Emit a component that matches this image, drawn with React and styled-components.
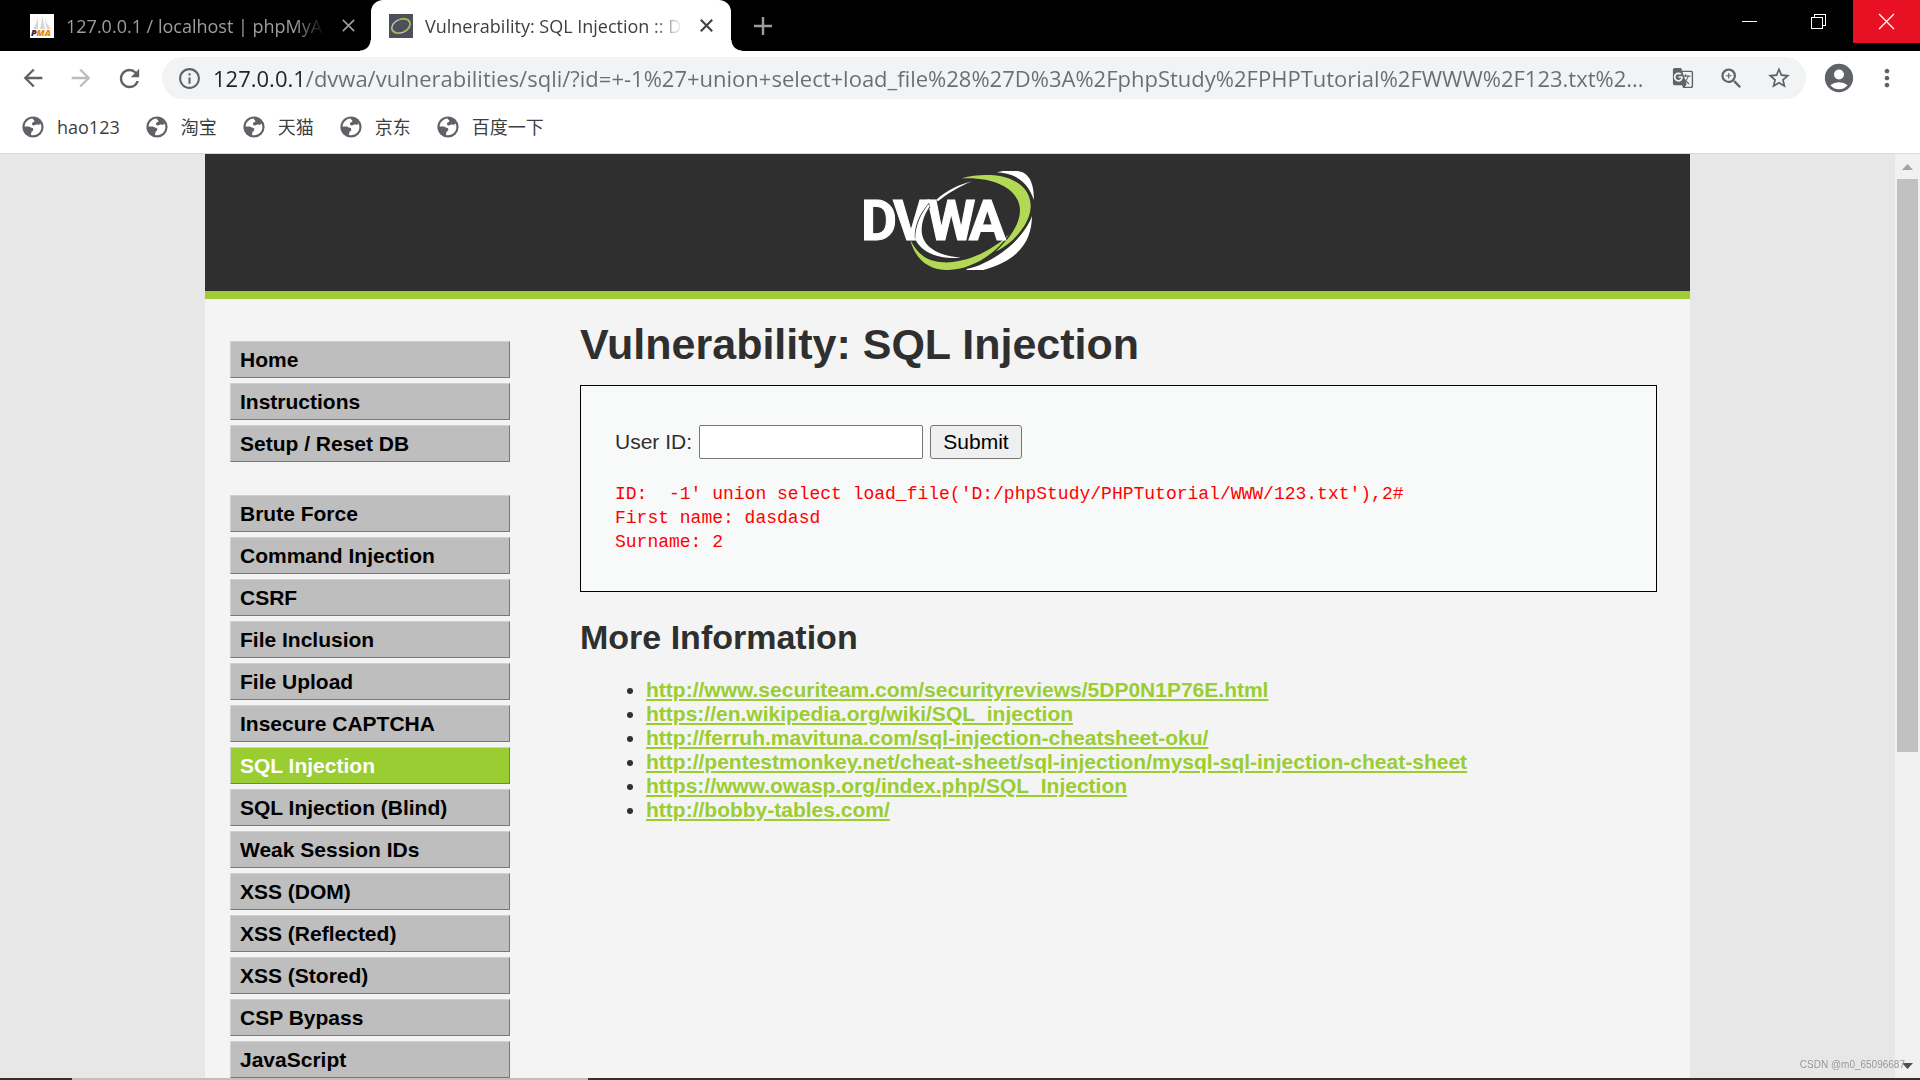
import React from "react";
import styled, { createGlobalStyle } from "styled-components";
import {
  MdArrowBack,
  MdArrowForward,
  MdRefresh,
  MdInfoOutline,
  MdGTranslate,
  MdZoomIn,
  MdStarBorder,
  MdAccountCircle,
  MdMoreVert,
} from "react-icons/md";

const uiFont = `"Open Sans", "Noto Sans CJK SC", sans-serif`;
const pageFont = `"Liberation Sans", Arial, sans-serif`;

const GlobalStyle = createGlobalStyle`
  *, *::before, *::after { box-sizing: border-box; }
  body { margin: 0; overflow: hidden; font-family: ${pageFont}; }
  button, input { font-family: inherit; }
  svg { display: block; flex: none; }
`;

const Window = styled.div`
  display: flex;
  flex-direction: column;
  height: 100vh;
  background: #fff;
`;

/* ---------- tab strip ---------- */

const TabStrip = styled.header`
  display: flex;
  align-items: flex-start;
  flex: none;
  height: 51px;
  background: #000;
  font-family: ${uiFont};
`;

const Tab = styled.div`
  position: relative;
  display: flex;
  align-items: center;
  gap: 12px;
  flex: none;
  width: ${(p) => (p.$active ? 360 : 371)}px;
  height: 51px;
  padding: 0 ${(p) => (p.$active ? 14 : 12)}px 0 ${(p) => (p.$active ? 18 : 30)}px;
  border-radius: 12px 12px 0 0;
  background: ${(p) => (p.$active ? "#fff" : "#000")};
  color: ${(p) => (p.$active ? "#3c4043" : "#9b9ea2")};

  &::before,
  &::after {
    content: "";
    display: ${(p) => (p.$active ? "block" : "none")};
    position: absolute;
    bottom: 0;
    width: 11px;
    height: 11px;
  }
  &::before {
    right: 100%;
    background: radial-gradient(circle at 0 0, #000 10px, #fff 11px);
  }
  &::after {
    left: 100%;
    background: radial-gradient(circle at 100% 0, #000 10px, #fff 11px);
  }
`;

const TabTitle = styled.span`
  flex: 1;
  min-width: 0;
  white-space: nowrap;
  font-size: 18px;
  line-height: 26px;
  mask-image: linear-gradient(90deg, #000 calc(100% - 30px), transparent);
`;

const PlainButton = styled.button`
  display: flex;
  align-items: center;
  justify-content: center;
  flex: none;
  padding: 0;
  border: 0;
  background: none;
  color: inherit;
`;

const TabClose = styled(PlainButton)`
  width: 22px;
  height: 22px;
`;

const NewTab = styled(PlainButton)`
  width: 64px;
  height: 51px;
  color: #9b9ea2;
`;

const WindowControls = styled.div`
  display: flex;
  margin-left: auto;
`;

const WindowButton = styled(PlainButton)`
  width: ${(p) => (p.$danger ? 67 : 69)}px;
  height: 43px;
  color: #fff;
  background: ${(p) => (p.$danger ? "#e81123" : "transparent")};
`;

/* ---------- toolbar ---------- */

const Toolbar = styled.div`
  display: flex;
  align-items: center;
  flex: none;
  height: 54px;
  padding: 0 9px;
  color: #5f6368;
  font-family: ${uiFont};
`;

const ToolButton = styled(PlainButton)`
  width: 48px;
  height: 42px;
  color: ${(p) => (p.$faded ? "#babcbe" : "#5f6368")};
`;

const AddressBar = styled.form`
  display: flex;
  align-items: center;
  flex: 1;
  min-width: 0;
  height: 42px;
  margin: 0 9px;
  padding: 0 3px 0 15px;
  border-radius: 21px;
  background: #f1f3f4;
`;

const Address = styled.input`
  flex: 1;
  min-width: 0;
  height: 32px;
  margin: 0 8px 0 11px;
  padding: 0;
  border: 0;
  outline: 0;
  font-size: 22px;
  color: transparent;
  background: linear-gradient(90deg, #202124 90px, #6a6d71 90px);
  background-clip: text;
  -webkit-background-clip: text;
`;

const Bookmarks = styled.nav`
  display: flex;
  align-items: center;
  gap: 26px;
  flex: none;
  height: 49px;
  padding: 0 22px 4px;
  border-bottom: 1px solid #d9dadc;
  font-family: ${uiFont};
`;

const Bookmark = styled.a`
  display: flex;
  align-items: center;
  gap: 13px;
  color: #3c4043;
  font-size: 18px;
  line-height: 26px;
  text-decoration: none;
`;

/* ---------- viewport ---------- */

const Viewport = styled.div`
  display: flex;
  flex: 1;
  min-height: 0;
  overflow: hidden;
`;

const Page = styled.div`
  flex: 1;
  min-width: 0;
  padding: 0 205px;
  overflow: hidden;
  background: #e7e7e7;
`;

const Container = styled.div`
  min-height: 100%;
  background: #f4f4f4;
  color: #2f2f2f;
  font-size: 21px;
`;

const Banner = styled.header`
  display: flex;
  justify-content: center;
  padding: 17px 0 21px;
  border-bottom: 8px solid #a1cc33;
  background: #2f2f2f;
`;

const Columns = styled.div`
  display: flex;
  align-items: flex-start;
  gap: 70px;
  padding: 0 33px 0 25px;
`;

const Sidebar = styled.nav`
  display: flex;
  flex-direction: column;
  gap: 28px;
  flex: none;
  width: 280px;
  padding-top: 42px;
`;

const MenuGroup = styled.ul`
  margin: 0;
  padding: 0;
  list-style: none;
`;

const MenuItem = styled.li`
  margin-bottom: 5px;
`;

const MenuLink = styled.a`
  display: block;
  height: 37px;
  padding: 0 9px;
  border: 1px solid;
  border-color: #d0d0d0 #6e7891 #6e7891 #d0d0d0;
  background: ${(p) => (p.$current ? "#9acd32" : "#bebebe")};
  color: ${(p) => (p.$current ? "#fff" : "#000")};
  font-weight: bold;
  line-height: 35px;
  text-decoration: none;
`;

const Main = styled.main`
  flex: 1;
  min-width: 0;
`;

const Title = styled.h1`
  margin: 20px 0 16px;
  font-size: 43px;
  line-height: 50px;
`;

const Panel = styled.section`
  padding: 39px 34px 37px;
  border: 1px solid #000;
  background: #f8faf9;
`;

const QueryForm = styled.form`
  display: flex;
  align-items: center;
  gap: 7px;
`;

const QueryInput = styled.input`
  width: 224px;
  height: 34px;
  padding: 2px 4px;
  border: 1px solid #767676;
  border-radius: 2px;
  background: #fff;
  font-size: 21px;
`;

const SubmitButton = styled.button`
  width: 92px;
  height: 34px;
  padding: 0;
  border: 1px solid #767676;
  border-radius: 3px;
  background: #efefef;
  color: #000;
  font-size: 21px;
  line-height: 24px;
`;

const Result = styled.pre`
  margin: 23px 0 0;
  color: #f00;
  font-family: "Liberation Mono", "Noto Sans CJK SC", monospace;
  font-size: 18px;
  line-height: 24px;
`;

const Subtitle = styled.h2`
  margin: 25px 0 21px;
  font-size: 34px;
  line-height: 40px;
`;

const LinkList = styled.ul`
  margin: 0;
  padding-left: 66px;
  line-height: 24px;
`;

const ExternalLink = styled.a`
  color: #9acd32;
  font-weight: bold;
`;

/* ---------- scrollbar, bottom edge, credit ---------- */

const ScrollTrack = styled.div`
  display: flex;
  flex-direction: column;
  flex: none;
  width: 25px;
  background: #f1f1f1;
`;

const ScrollArrow = styled(PlainButton)`
  width: 25px;
  height: 25px;
`;

const ScrollThumb = styled.div`
  flex: 0 0 62%;
  margin: 0 2px auto;
  background: #c1c1c1;
`;

const BottomEdge = styled.div`
  display: grid;
  grid-template-columns: 72px 516px 1fr;
  flex: none;
  height: 2px;
  background: #332f30;
`;

const EdgeSegment = styled.div`
  grid-column: 2;
  background: #bfbfbf;
`;

const Credit = styled.span`
  position: fixed;
  right: 15px;
  bottom: 8px;
  color: #909090;
  font-size: 10px;
  line-height: 14px;
  text-shadow: 0 0 1px #fff;
`;

/* ---------- drawings ---------- */

const CrossIcon = ({ size, width }) => (
  <svg width={size} height={size} viewBox="0 0 16 16" aria-hidden="true">
    <path d="M1 1l14 14M15 1L1 15" stroke="currentColor" strokeWidth={width} fill="none" />
  </svg>
);

const PmaIcon = () => (
  <svg width="24" height="24" viewBox="0 0 24 24" aria-hidden="true">
    <rect width="24" height="24" fill="#fdfdfd" />
    <path d="M8 3C7 8 5 12 3 15h5zM12 1c0 5-1 10-2 14h5c-1-5-2-10-3-14zM15 4c0 4 1 8 2 11h4c-3-3-5-7-6-11z" fill="#d6d6d6" />
    <text x="1" y="22" fontFamily="Open Sans, sans-serif" fontWeight="800" fontStyle="italic" fontSize="9" fill="#2b2b52">
      P<tspan fill="#e8860c">MA</tspan>
    </text>
  </svg>
);

const DvwaIcon = () => (
  <svg width="24" height="24" viewBox="0 0 24 24" aria-hidden="true">
    <rect width="24" height="24" fill="#4d505b" />
    <ellipse cx="12" cy="12" rx="9.5" ry="6.600" transform="rotate(-22 12 12)" fill="none" stroke="#c8cbc4" strokeWidth="1.3" />
    <path d="M9 6c6-3 12-1 12 3 0 4-3 7-7 9M2.500 14c0 5 5 6 9 4.500" fill="none" stroke="#98b53c" strokeWidth="1.3" />
  </svg>
);

const GlobeIcon = () => (
  <svg width="22" height="22" viewBox="0 0 22 22" aria-hidden="true">
    <circle cx="11" cy="11" r="10.6" fill="#5f6368" />
    <path
      d="M10.5 2.6C6 3 2.8 6.600 2.600 10.600H6.500c1.500 0 1.800 1 3.200 1.200 1.500.2 1.800 1 1.500 2.100-.3 1.200-1.600 1.200-1.900 2.600l-.3 2.600c6 1.300 10.400-3 10.400-8 0-1.400-.3-2.600-.9-3.700-.8 1.300-2.200 1.500-3.600 1.200-1.600-.3-1.700 1-3.100.9-1.700-.1-2.400-1.600-1.400-2.700.9-.9 2-.5 2-1.700 0-1-1.300-1.100-1.900-2.500z"
      fill="#fff"
    />
  </svg>
);

const RestoreIcon = () => (
  <svg width="16" height="16" viewBox="0 0 16 16" shapeRendering="crispEdges" aria-hidden="true">
    <path d="M.5 3.500h11v11h-11zM3.500 3.500v-3h11v11h-3" fill="none" stroke="currentColor" />
  </svg>
);

const DvwaLogo = () => (
  <svg width="173" height="99" viewBox="123 63 519 297" role="img" aria-label="DVWA">
    <path d="M425 85C455 76 480 74 510 75C590 78 634 120 632 172C630 222 580 280 527 304C580 255 600 215 600 180C598 120 530 80 425 85z" fill="#b2d856" />
    <path d="M270 268C285 330 330 362 385 360C450 358 520 320 568 252C520 300 440 340 370 337C320 335 290 310 270 268z" fill="#b2d856" />
    <path d="M440 357C520 340 610 270 636 198C635 270 600 330 490 360H440z" fill="#fff" />
    <path d="M530 67L550 63H590C625 65 642 95 642 150C625 105 600 72 530 67z" fill="#fff" />
    <path d="M457 94C420 102 380 122 349 149L354 154C385 129 420 108 457 94z" fill="#fff" />
    <text x="123 219 321 446" y="269" fontFamily="Roboto, sans-serif" fontWeight="700" fontSize="166" fill="#fff" stroke="#fff" strokeWidth="3">
      DVWA
    </text>
    <path d="M327 158C295 195 281 235 285 268L306 262C303 232 310 200 331 172z" fill="#2f2f2f" />
    <path d="M325 163C300 195 284 235 286 268C304 308 360 330 422 323C345 316 305 285 305 240C305 215 315 190 330 168z" fill="#fff" />
  </svg>
);

const Triangle = ({ down, color }) => (
  <svg width="11" height="6" viewBox="0 0 11 6" aria-hidden="true">
    <path d={down ? "M0 0h11L5.500 6z" : "M0 6h11L5.500 0z"} fill={color} />
  </svg>
);

/* ---------- data ---------- */

const bookmarks = ["hao123", "淘宝", "天猫", "京东", "百度一下"];

const menu = [
  ["Home", "Instructions", "Setup / Reset DB"],
  [
    "Brute Force",
    "Command Injection",
    "CSRF",
    "File Inclusion",
    "File Upload",
    "Insecure CAPTCHA",
    "SQL Injection",
    "SQL Injection (Blind)",
    "Weak Session IDs",
    "XSS (DOM)",
    "XSS (Reflected)",
    "XSS (Stored)",
    "CSP Bypass",
    "JavaScript",
  ],
];

const links = [
  "http://www.securiteam.com/securityreviews/5DP0N1P76E.html",
  "https://en.wikipedia.org/wiki/SQL_injection",
  "http://ferruh.mavituna.com/sql-injection-cheatsheet-oku/",
  "http://pentestmonkey.net/cheat-sheet/sql-injection/mysql-sql-injection-cheat-sheet",
  "https://www.owasp.org/index.php/SQL_Injection",
  "http://bobby-tables.com/",
];

const address =
  "127.0.0.1/dvwa/vulnerabilities/sqli/?id=+-1%27+union+select+load_file%28%27D%3A%2FphpStudy%2FPHPTutorial%2FWWW%2F123.txt%2...";

const result = `ID:  -1' union select load_file('D:/phpStudy/PHPTutorial/WWW/123.txt'),2#
First name: dasdasd
Surname: 2`;

export default function App() {
  return (
    <Window>
      <GlobalStyle />
      <TabStrip>
        <Tab>
          <PmaIcon />
          <TabTitle>127.0.0.1 / localhost | phpMyA</TabTitle>
          <TabClose aria-label="Close tab"><CrossIcon size={13} width={2} /></TabClose>
        </Tab>
        <Tab $active>
          <DvwaIcon />
          <TabTitle>Vulnerability: SQL Injection :: D</TabTitle>
          <TabClose aria-label="Close tab"><CrossIcon size={13} width={2.6} /></TabClose>
        </Tab>
        <NewTab aria-label="New tab">
          <svg width="18" height="18" viewBox="0 0 18 18" aria-hidden="true">
            <path d="M9 0v18M0 9h18" stroke="currentColor" strokeWidth="2.4" />
          </svg>
        </NewTab>
        <WindowControls>
          <WindowButton aria-label="Minimize">
            <svg width="15" height="2" viewBox="0 0 15 2" aria-hidden="true"><path d="M0 .5h15" stroke="#fff" /></svg>
          </WindowButton>
          <WindowButton aria-label="Restore"><RestoreIcon /></WindowButton>
          <WindowButton $danger aria-label="Close"><CrossIcon size={17} width={1.2} /></WindowButton>
        </WindowControls>
      </TabStrip>

      <Toolbar>
        <ToolButton aria-label="Back"><MdArrowBack size={28} /></ToolButton>
        <ToolButton $faded aria-label="Forward"><MdArrowForward size={28} /></ToolButton>
        <ToolButton aria-label="Reload"><MdRefresh size={29} /></ToolButton>
        <AddressBar>
          <MdInfoOutline size={25} />
          <Address aria-label="Address" defaultValue={address} />
          <ToolButton type="button" aria-label="Translate"><MdGTranslate size={22} /></ToolButton>
          <ToolButton type="button" aria-label="Zoom"><MdZoomIn size={27} /></ToolButton>
          <ToolButton type="button" aria-label="Bookmark"><MdStarBorder size={26} /></ToolButton>
        </AddressBar>
        <ToolButton aria-label="Profile"><MdAccountCircle size={34} /></ToolButton>
        <ToolButton aria-label="Menu"><MdMoreVert size={28} /></ToolButton>
      </Toolbar>

      <Bookmarks aria-label="Bookmarks">
        {bookmarks.map((name) => (
          <Bookmark key={name} href="#">
            <GlobeIcon />
            {name}
          </Bookmark>
        ))}
      </Bookmarks>

      <Viewport>
        <Page>
          <Container>
            <Banner><DvwaLogo /></Banner>
            <Columns>
              <Sidebar aria-label="Main menu">
                {menu.map((group) => (
                  <MenuGroup key={group[0]}>
                    {group.map((name) => (
                      <MenuItem key={name}>
                        <MenuLink href="#" $current={name === "SQL Injection"}>{name}</MenuLink>
                      </MenuItem>
                    ))}
                  </MenuGroup>
                ))}
              </Sidebar>
              <Main>
                <Title>Vulnerability: SQL Injection</Title>
                <Panel>
                  <QueryForm>
                    <label htmlFor="user-id">User ID:</label>
                    <QueryInput id="user-id" type="text" />
                    <SubmitButton type="button">Submit</SubmitButton>
                  </QueryForm>
                  <Result>{result}</Result>
                </Panel>
                <Subtitle>More Information</Subtitle>
                <LinkList>
                  {links.map((url) => (
                    <li key={url}><ExternalLink href="#">{url}</ExternalLink></li>
                  ))}
                </LinkList>
              </Main>
            </Columns>
          </Container>
        </Page>
        <ScrollTrack>
          <ScrollArrow aria-label="Scroll up"><Triangle color="#a3a3a3" /></ScrollArrow>
          <ScrollThumb />
          <ScrollArrow aria-label="Scroll down"><Triangle down color="#505050" /></ScrollArrow>
        </ScrollTrack>
      </Viewport>
      <BottomEdge><EdgeSegment /></BottomEdge>
      <Credit>CSDN @m0_65096687</Credit>
    </Window>
  );
}
